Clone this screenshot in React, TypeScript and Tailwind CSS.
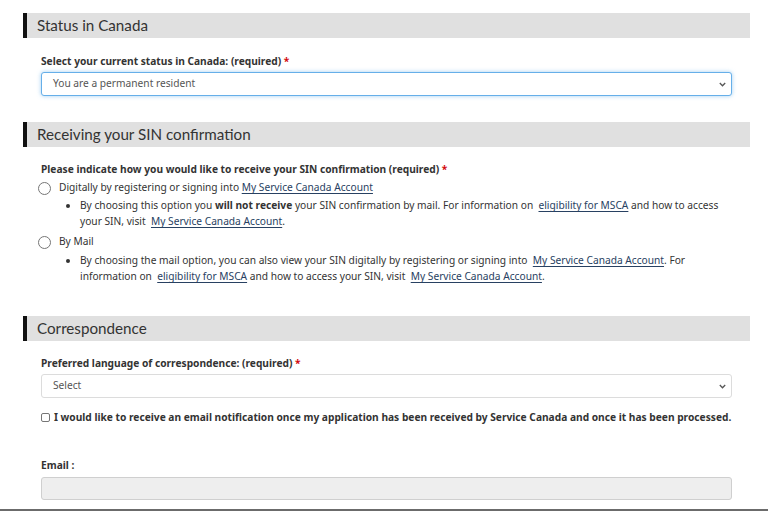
import React from "react";

const body = { fontFamily: '"Noto Sans", "Open Sans", sans-serif' };
const head = { fontFamily: 'Lato, "Noto Sans", sans-serif' };

function Heading({ children }: { children: React.ReactNode }) {
  return (
    <div
      className="ml-[23px] w-[727px] h-[25px] border-l-[4px] border-[#111] bg-[#e0e0e0] pl-[10px] flex items-center text-[15.2px] text-[#333] leading-none"
      style={head}
    >
      {children}
    </div>
  );
}

function Chevron() {
  return (
    <svg width="7" height="5" viewBox="0 0 7 5" className="mr-[1px]">
      <path d="M0.8 1 L3.5 3.8 L6.2 1" fill="none" stroke="#555" strokeWidth="1.3" />
    </svg>
  );
}

function Link({ children }: { children: React.ReactNode }) {
  return <span className="text-[#284162] underline underline-offset-[1.5px]">{children}</span>;
}

function Req() {
  return <span className="text-[#d3080c]"> *</span>;
}

function Radio() {
  return <span className="w-[13px] h-[13px] rounded-full border border-[#767676] bg-white shrink-0" />;
}

export default function App() {
  return (
    <div className="w-[768px] h-[511px] overflow-hidden bg-white text-[#333]" style={body}>
      <div className="pt-[13px] flex flex-col">
        <Heading>Status in Canada</Heading>
        <div className="ml-[41px] w-[691px] flex flex-col text-[10.2px]">
          <div className="mt-[16px] h-[15px] leading-[15px] font-bold">
            Select your current status in Canada: (required)
            <Req />
          </div>
          <div className="mt-[3px] h-[24px] rounded-[3px] border border-[#66afe9] shadow-[0_0_4px_rgba(102,175,233,0.6)] bg-white flex items-center justify-between pl-[11px] pr-[4px] text-[#555]">
            <span>You are a permanent resident</span>
            <Chevron />
          </div>
        </div>

        <div className="mt-[26px]">
          <Heading>Receiving your SIN confirmation</Heading>
        </div>
        <div className="ml-[41px] w-[691px] flex flex-col text-[10.2px]">
          <div className="mt-[15px] h-[15px] leading-[15px] font-bold">
            Please indicate how you would like to receive your SIN confirmation (required)
            <Req />
          </div>
          <div className="mt-[3px] h-[16px] ml-[-3px] flex items-center gap-[8px]">
            <Radio />
            <span>
              Digitally by registering or signing into <Link>My Service Canada Account</Link>
            </span>
          </div>
          <ul className="mt-[1px] list-disc pl-[39px] pr-[4px] leading-[16px]">
            <li>
              By choosing this option you <b>will not receive</b> your SIN confirmation by mail. For
              information on&nbsp; <Link>eligibility for MSCA</Link> and how to access your SIN,
              visit&nbsp; <Link>My Service Canada Account</Link>.
            </li>
          </ul>
          <div className="mt-[5px] h-[16px] ml-[-3px] flex items-center gap-[8px]">
            <Radio />
            <span>By Mail</span>
          </div>
          <ul className="mt-[2px] list-disc pl-[39px] pr-[4px] leading-[16px]">
            <li>
              By choosing the mail option, you can also view your SIN digitally by registering or
              signing into&nbsp; <Link>My Service Canada Account</Link>. For information on&nbsp;{" "}
              <Link>eligibility for MSCA</Link> and how to access your SIN, visit&nbsp;{" "}
              <Link>My Service Canada Account</Link>.
            </li>
          </ul>
        </div>

        <div className="mt-[32px]">
          <Heading>Correspondence</Heading>
        </div>
        <div className="ml-[41px] w-[691px] flex flex-col text-[10.2px]">
          <div className="mt-[15px] h-[15px] leading-[15px] font-bold">
            Preferred language of correspondence: (required)
            <Req />
          </div>
          <div className="mt-[3px] h-[24px] rounded-[3px] border border-[#dcdcdc] bg-white flex items-center justify-between pl-[11px] pr-[4px] text-[#555]">
            <span>Select</span>
            <Chevron />
          </div>
          <div className="mt-[12px] h-[15px] flex items-center gap-[4px] font-bold whitespace-nowrap">
            <span className="w-[9px] h-[9px] rounded-[2px] border border-[#767676] bg-white shrink-0" />
            <span>
              I would like to receive an email notification once my application has been received by
              Service Canada and once it has been processed.
            </span>
          </div>
          <div className="mt-[33px] h-[15px] leading-[15px] font-bold">Email :</div>
          <div className="mt-[4px] h-[23px] rounded-[3px] border border-[#cfcfcf] bg-[#eeeeee]" />
        </div>
        <div className="mt-[9px] h-[2px] bg-[#6b6b6b]" />
      </div>
    </div>
  );
}
